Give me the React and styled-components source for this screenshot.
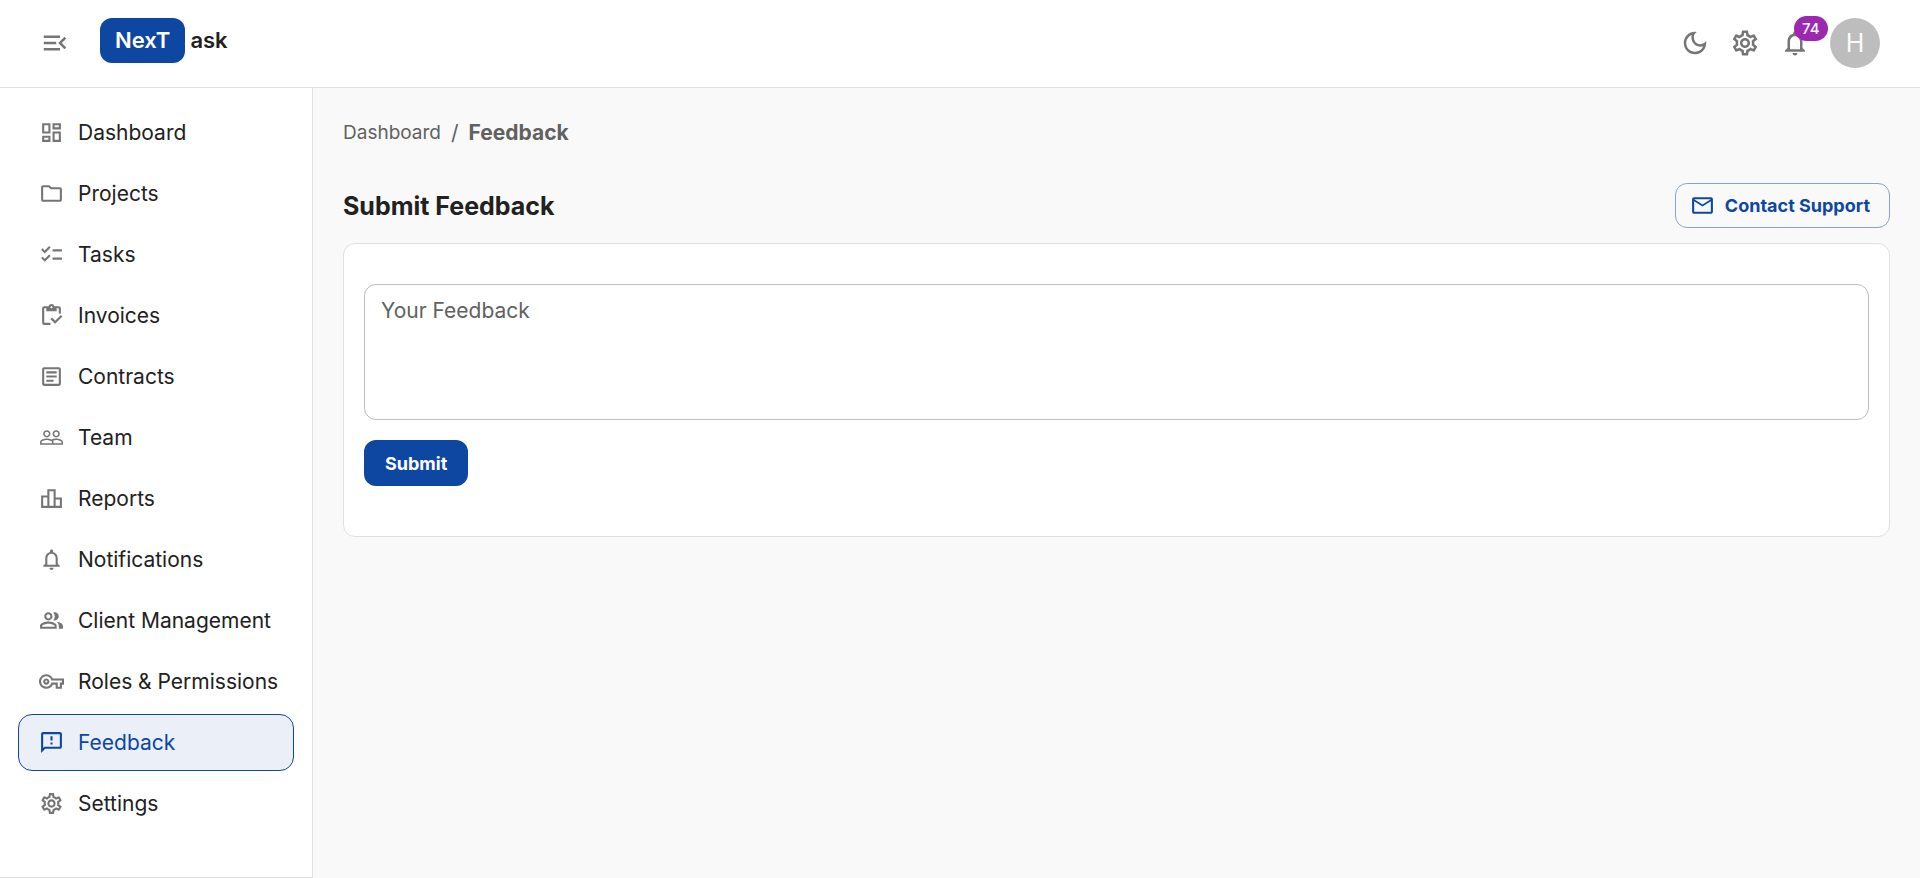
import React, { useState } from 'react';
import {
  MdChecklist,
  MdMailOutline,
  MdMenuOpen,
  MdNotificationsNone,
  MdOutlineArticle,
  MdOutlineDarkMode,
  MdOutlineDashboard,
  MdOutlineFeedback,
  MdOutlineFolder,
  MdOutlineInventory,
  MdOutlineLeaderboard,
  MdOutlinePeopleAlt,
  MdOutlineSettings,
  MdOutlineVpnKey,
  MdPeopleOutline,
} from 'react-icons/md';
import styled, { createGlobalStyle, ThemeProvider } from 'styled-components';

const theme = {
  primary: '#0d47a1',
  primarySoft: '#ebeff8',
  badge: '#9c27b0',
  text: '#212121',
  textMuted: '#616161',
  icon: '#757575',
  border: '#e0e0e0',
  inputBorder: '#bdbdbd',
  background: '#f9f9f9',
  paper: '#fff',
  radius: '12px',
};

const GlobalStyle = createGlobalStyle`
  * {
    box-sizing: border-box;
  }
  body {
    margin: 0;
    color: ${theme.text};
    background: ${theme.background};
    font-family: Inter, 'Open Sans', sans-serif;
    font-size: 21px;
  }
  button,
  textarea {
    font-family: inherit;
  }
`;

const Page = styled.div`
  display: flex;
  flex-direction: column;
  min-height: 100vh;
`;

const Header = styled.header`
  display: flex;
  align-items: center;
  height: 88px;
  padding: 0 40px 2px;
  background: ${({ theme }) => theme.paper};
  border-bottom: 1px solid ${({ theme }) => theme.border};
`;

const IconButton = styled.button`
  position: relative;
  display: flex;
  padding: 0;
  border: none;
  background: none;
  color: ${({ theme }) => theme.icon};
  font-size: 30px;
  cursor: pointer;
`;

const Logo = styled.a`
  display: flex;
  align-items: baseline;
  gap: 5px;
  margin: 0 auto 4px 30px;
  color: ${({ theme }) => theme.text};
  font-size: 22px;
  font-weight: 600;
  text-decoration: none;
`;

const LogoMark = styled.span`
  padding: 0 15px;
  line-height: 45px;
  color: #fff;
  background: ${({ theme }) => theme.primary};
  border-radius: ${({ theme }) => theme.radius};
`;

const HeaderActions = styled.div`
  display: flex;
  align-items: center;
  gap: 20px;
`;

const Badge = styled.span`
  position: absolute;
  left: 14px;
  bottom: 17px;
  padding: 0 8px;
  border-radius: 13px;
  background: ${({ theme }) => theme.badge};
  color: #fff;
  font-size: 15px;
  font-weight: 500;
  line-height: 25px;
`;

const Avatar = styled.button`
  width: 50px;
  height: 50px;
  padding: 0;
  border: none;
  border-radius: 50%;
  background: #bdbdbd;
  color: #fafafa;
  font-size: 25px;
  cursor: pointer;
`;

const Body = styled.div`
  display: flex;
  flex: 1;
`;

const Sidebar = styled.nav`
  flex: none;
  width: 313px;
  padding: 16px 18px;
  background: ${({ theme }) => theme.paper};
  border-right: 1px solid ${({ theme }) => theme.border};
  border-bottom: 1px solid ${({ theme }) => theme.border};
`;

const NavList = styled.ul`
  display: flex;
  flex-direction: column;
  gap: 4px;
  margin: 0;
  padding: 0;
  list-style: none;
`;

const NavLink = styled.a`
  display: flex;
  align-items: center;
  gap: 14px;
  height: 57px;
  padding: 0 20px;
  border: 1px solid ${({ theme, $active }) => ($active ? theme.primary : 'transparent')};
  border-radius: 14px;
  background: ${({ theme, $active }) => ($active ? theme.primarySoft : 'none')};
  color: ${({ theme, $active }) => ($active ? theme.primary : theme.text)};
  text-decoration: none;
  white-space: nowrap;

  svg {
    flex: none;
    width: 25px;
    height: 25px;
    color: ${({ theme, $active }) => ($active ? theme.primary : theme.icon)};
  }
`;

const Main = styled.main`
  flex: 1;
  min-width: 0;
  padding: 30px;
`;

const Breadcrumbs = styled.nav`
  display: flex;
  align-items: center;
  gap: 10px;
  margin-bottom: 35px;
  color: ${({ theme }) => theme.textMuted};
  line-height: 30px;
`;

const BreadcrumbLink = styled.a`
  color: inherit;
  font-size: 19px;
  text-decoration: none;
`;

const BreadcrumbCurrent = styled.span`
  font-weight: 700;
`;

const TitleRow = styled.div`
  display: flex;
  align-items: center;
  justify-content: space-between;
  margin-bottom: 15px;
`;

const Title = styled.h1`
  margin: 0;
  font-size: 25px;
  font-weight: 700;
`;

const Button = styled.button`
  display: flex;
  align-items: center;
  gap: 10px;
  height: ${({ $outlined }) => ($outlined ? '45px' : '46px')};
  padding: ${({ $outlined }) => ($outlined ? '0 19px 0 14px' : '0 21px')};
  border: ${({ $outlined }) => ($outlined ? '1px solid #86a3d0' : 'none')};
  border-radius: ${({ theme }) => theme.radius};
  background: ${({ theme, $outlined }) => ($outlined ? 'none' : theme.primary)};
  color: ${({ theme, $outlined }) => ($outlined ? theme.primary : '#fff')};
  font-size: 18px;
  font-weight: 700;
  cursor: pointer;

  svg {
    width: 25px;
    height: 25px;
  }
`;

const Card = styled.form`
  display: flex;
  flex-direction: column;
  align-items: flex-start;
  gap: 20px;
  padding: 40px 20px 50px;
  background: ${({ theme }) => theme.paper};
  border: 1px solid ${({ theme }) => theme.border};
  border-radius: ${({ theme }) => theme.radius};
`;

const FeedbackInput = styled.textarea`
  display: block;
  width: 100%;
  height: 136px;
  padding: 11px 16px;
  border: 1px solid ${({ theme }) => theme.inputBorder};
  border-radius: ${({ theme }) => theme.radius};
  color: ${({ theme }) => theme.text};
  font-size: 21px;
  line-height: 29px;
  resize: none;

  &::placeholder {
    color: ${({ theme }) => theme.textMuted};
    opacity: 1;
  }
`;

const navItems = [
  { path: '/dashboard', label: 'Dashboard', Icon: MdOutlineDashboard },
  { path: '/projects', label: 'Projects', Icon: MdOutlineFolder },
  { path: '/tasks', label: 'Tasks', Icon: MdChecklist },
  { path: '/invoices', label: 'Invoices', Icon: MdOutlineInventory },
  { path: '/contracts', label: 'Contracts', Icon: MdOutlineArticle },
  { path: '/team', label: 'Team', Icon: MdPeopleOutline },
  { path: '/reports', label: 'Reports', Icon: MdOutlineLeaderboard },
  { path: '/notifications', label: 'Notifications', Icon: MdNotificationsNone },
  { path: '/clients', label: 'Client Management', Icon: MdOutlinePeopleAlt },
  { path: '/roles', label: 'Roles & Permissions', Icon: MdOutlineVpnKey },
  { path: '/feedback', label: 'Feedback', Icon: MdOutlineFeedback },
  { path: '/settings', label: 'Settings', Icon: MdOutlineSettings },
];

const TopBar = () => (
  <Header>
    <IconButton type="button" aria-label="Collapse menu">
      <MdMenuOpen />
    </IconButton>
    <Logo href="#/">
      <LogoMark>NexT</LogoMark>
      ask
    </Logo>
    <HeaderActions>
      <IconButton type="button" aria-label="Dark mode">
        <MdOutlineDarkMode />
      </IconButton>
      <IconButton type="button" aria-label="Settings">
        <MdOutlineSettings />
      </IconButton>
      <IconButton type="button" aria-label="Notifications">
        <MdNotificationsNone />
        <Badge>74</Badge>
      </IconButton>
      <Avatar type="button">H</Avatar>
    </HeaderActions>
  </Header>
);

const SideNav = ({ current }) => (
  <Sidebar>
    <NavList>
      {navItems.map(({ path, label, Icon }) => (
        <li key={path}>
          <NavLink href={`#${path}`} $active={path === current}>
            <Icon />
            {label}
          </NavLink>
        </li>
      ))}
    </NavList>
  </Sidebar>
);

const FeedbackForm = () => {
  const [feedback, setFeedback] = useState('');

  const handleSubmit = (e) => {
    e.preventDefault();
    setFeedback('');
  };

  return (
    <Card onSubmit={handleSubmit}>
      <FeedbackInput
        aria-label="Your Feedback"
        placeholder="Your Feedback"
        value={feedback}
        onChange={(e) => setFeedback(e.target.value)}
      />
      <Button type="submit">Submit</Button>
    </Card>
  );
};

const App = () => (
  <ThemeProvider theme={theme}>
    <GlobalStyle />
    <Page>
      <TopBar />
      <Body>
        <SideNav current="/feedback" />
        <Main>
          <Breadcrumbs aria-label="Breadcrumb">
            <BreadcrumbLink href="#/dashboard">Dashboard</BreadcrumbLink>
            <span>/</span>
            <BreadcrumbCurrent>Feedback</BreadcrumbCurrent>
          </Breadcrumbs>
          <TitleRow>
            <Title>Submit Feedback</Title>
            <Button type="button" $outlined>
              <MdMailOutline />
              Contact Support
            </Button>
          </TitleRow>
          <FeedbackForm />
        </Main>
      </Body>
    </Page>
  </ThemeProvider>
);

export default App;
